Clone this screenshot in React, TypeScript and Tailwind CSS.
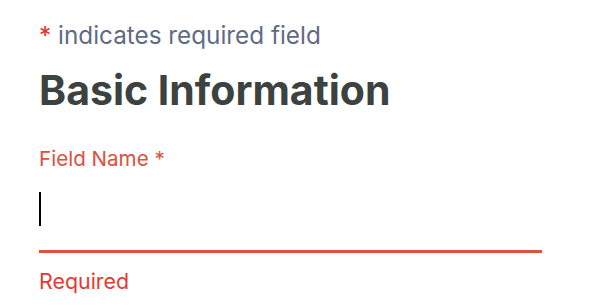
export default function App() {
  return (
    <div className="w-[594px] h-[308px] bg-white pl-[39px] pt-[19px]" style={{ fontFamily: "Inter, 'Noto Sans', sans-serif" }}>
      <p className="text-[24.3px] leading-[32px] text-[#5f6b85]">
        <span className="text-[#e5322a]">*</span> indicates required field
      </p>
      <h2 className="mt-[15px] text-[41px] leading-[48px] font-bold text-[#3c4240]">Basic Information</h2>
      <label className="block mt-[31px] text-[20.6px] leading-[28px] text-[#df4f3c]">Field Name *</label>
      <div className="w-[503px] pt-[19px] pb-[24px] border-b-[3px] border-[#df5040]">
        <div className="w-[2px] h-[34px] bg-black" />
      </div>
      <p className="mt-[14px] text-[21.4px] leading-[28px] text-[#e8392f]">Required</p>
    </div>
  );
}
